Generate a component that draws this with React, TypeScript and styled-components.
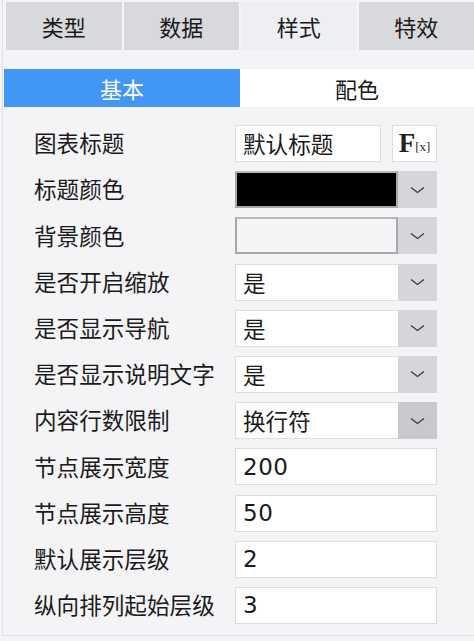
import React from "react";
import styled, { createGlobalStyle } from "styled-components";

const GlobalStyle = createGlobalStyle`
  html, body {
    margin: 0;
    padding: 0;
    background: #f4f4f6;
  }
  body {
    font-family: "Noto Sans CJK SC", "Noto Sans", sans-serif;
    color: #1b1b1b;
  }
  * {
    box-sizing: border-box;
  }
`;

const Panel = styled.div`
  margin-left: 2px;
  width: 472px;
  height: 636px;
  border-left: 1px solid #e2e2e6;
  border-bottom: 1px solid #e2e2e6;
  background: #f4f4f6;
`;

const TopTabs = styled.div`
  display: grid;
  grid-template-columns: repeat(4, 1fr);
  gap: 2px;
  padding: 2px 0 0 3px;
`;

const TopTab = styled.div<{ $active?: boolean }>`
  height: 48px;
  display: flex;
  align-items: center;
  justify-content: center;
  font-size: 22px;
  background: ${(p) => (p.$active ? "#eeeff2" : "#d8d9dc")};
  color: #1a1a1a;
`;

const SubTabs = styled.div`
  display: grid;
  grid-template-columns: 236px 1fr;
  margin: 19px 0 0 1px;
`;

const SubTab = styled.div<{ $active?: boolean }>`
  height: 38px;
  display: flex;
  align-items: center;
  justify-content: center;
  font-size: 22px;
  background: ${(p) => (p.$active ? "#4197f3" : "#ffffff")};
  color: ${(p) => (p.$active ? "#ffffff" : "#1a1a1a")};
`;

const Form = styled.div`
  display: flex;
  flex-direction: column;
  gap: 9.2px;
  padding: 18px 0 0 31px;
`;

const Row = styled.div`
  display: grid;
  grid-template-columns: 201px 202px;
  align-items: center;
  height: 37px;
`;

const Label = styled.div`
  font-size: 22.6px;
  line-height: 1;
  white-space: nowrap;
`;

const Field = styled.div`
  display: flex;
  height: 37px;
`;

const TextBox = styled.div<{ $grow?: boolean }>`
  height: 100%;
  width: ${(p) => (p.$grow ? "auto" : "146px")};
  flex: ${(p) => (p.$grow ? "1" : "none")};
  background: #ffffff;
  border: 1px solid #dedee0;
  display: flex;
  align-items: center;
  padding-left: 7px;
  font-size: 22.6px;
`;

const NumberText = styled.span`
  font-family: "DejaVu Sans", "Noto Sans", sans-serif;
  font-size: 23px;
  letter-spacing: 0.5px;
`;

const FxButton = styled.div`
  margin-left: 11px;
  width: 45px;
  height: 100%;
  background: #ffffff;
  border: 1px solid #dedee0;
  display: flex;
  align-items: center;
  justify-content: center;
  font-family: "Liberation Serif", "DejaVu Serif", serif;
  color: #222;
`;

const FxBig = styled.span`
  font-size: 27px;
  font-weight: bold;
  line-height: 1;
`;

const FxSmall = styled.span`
  font-size: 13px;
  line-height: 1;
  margin-top: 6px;
`;

const SelectBox = styled.div`
  flex: 1;
  height: 100%;
  background: #ffffff;
  border: 1px solid #dedee0;
  border-right: none;
  display: flex;
  align-items: center;
  padding-left: 7px;
  font-size: 22.6px;
`;

const Swatch = styled.div<{ $color: string }>`
  flex: 1;
  height: 100%;
  background: ${(p) => p.$color};
  border: 2px solid #a9a9ab;
  border-top-color: #b8b8ba;
`;

const ArrowButton = styled.div<{ $dark?: boolean }>`
  width: 39px;
  height: 100%;
  background: ${(p) => (p.$dark ? "#c9c9cd" : "#d6d6da")};
  display: flex;
  align-items: center;
  justify-content: center;
`;

const Chevron = () => (
  <svg width="15" height="8" viewBox="0 0 15 8">
    <path d="M1 1.5 L7.5 6.5 L14 1.5" fill="none" stroke="#3a3a3c" strokeWidth="1.3" />
  </svg>
);

type Item =
  | { label: string; kind: "title"; value: string }
  | { label: string; kind: "color"; color: string }
  | { label: string; kind: "select"; value: string; dark?: boolean }
  | { label: string; kind: "number"; value: string };

const items: Item[] = [
  { label: "图表标题", kind: "title", value: "默认标题" },
  { label: "标题颜色", kind: "color", color: "#000000" },
  { label: "背景颜色", kind: "color", color: "#f4f4f6" },
  { label: "是否开启缩放", kind: "select", value: "是" },
  { label: "是否显示导航", kind: "select", value: "是" },
  { label: "是否显示说明文字", kind: "select", value: "是" },
  { label: "内容行数限制", kind: "select", value: "换行符", dark: true },
  { label: "节点展示宽度", kind: "number", value: "200" },
  { label: "节点展示高度", kind: "number", value: "50" },
  { label: "默认展示层级", kind: "number", value: "2" },
  { label: "纵向排列起始层级", kind: "number", value: "3" },
];

function Control({ item }: { item: Item }) {
  switch (item.kind) {
    case "title":
      return (
        <Field>
          <TextBox>{item.value}</TextBox>
          <FxButton>
            <FxBig>F</FxBig>
            <FxSmall>[x]</FxSmall>
          </FxButton>
        </Field>
      );
    case "color":
      return (
        <Field>
          <Swatch $color={item.color} />
          <ArrowButton>
            <Chevron />
          </ArrowButton>
        </Field>
      );
    case "select":
      return (
        <Field>
          <SelectBox>{item.value}</SelectBox>
          <ArrowButton $dark={item.dark}>
            <Chevron />
          </ArrowButton>
        </Field>
      );
    default:
      return (
        <Field>
          <TextBox $grow>
            <NumberText>{item.value}</NumberText>
          </TextBox>
        </Field>
      );
  }
}

export default function App() {
  return (
    <>
      <GlobalStyle />
      <Panel>
        <TopTabs>
          <TopTab>类型</TopTab>
          <TopTab>数据</TopTab>
          <TopTab $active>样式</TopTab>
          <TopTab>特效</TopTab>
        </TopTabs>
        <SubTabs>
          <SubTab $active>基本</SubTab>
          <SubTab>配色</SubTab>
        </SubTabs>
        <Form>
          {items.map((item) => (
            <Row key={item.label}>
              <Label>{item.label}</Label>
              <Control item={item} />
            </Row>
          ))}
        </Form>
      </Panel>
    </>
  );
}
